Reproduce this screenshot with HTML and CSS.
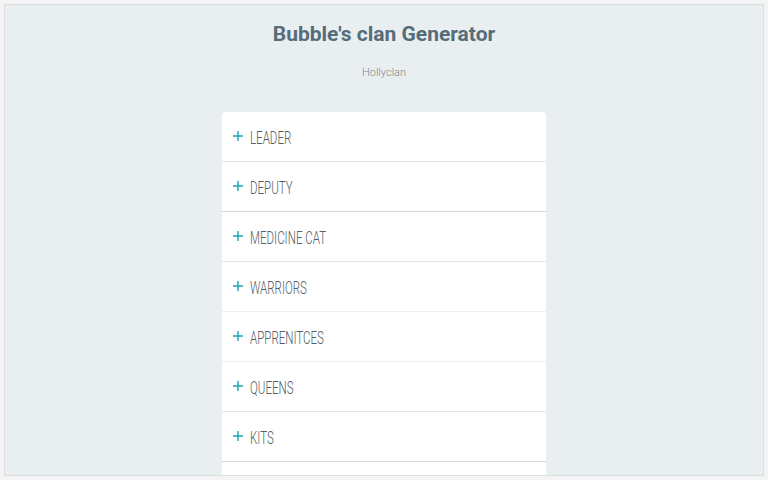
FILE: index.html
```html
<!DOCTYPE html>
<html lang="en">
  <head>
    <meta charset="UTF-8" />
    <meta name="viewport" content="width=device-width, initial-scale=1.0" />
    <title>Bubble's clan Generator</title>
    <link rel="stylesheet" href="styles.css">
  </head>
  <body>
    <div class="frame">
      <h1>Bubble's clan Generator</h1>
      <p class="clan-name">Hollyclan</p>

      <div class="ranks">
        <div class="rank"><svg class="plus" viewBox="0 0 10 10"><path d="M5 0V10M0 5H10"/></svg><span class="label">LEADER</span></div>
        <div class="rank dark"><svg class="plus" viewBox="0 0 10 10"><path d="M5 0V10M0 5H10"/></svg><span class="label">DEPUTY</span></div>
        <div class="rank"><svg class="plus" viewBox="0 0 10 10"><path d="M5 0V10M0 5H10"/></svg><span class="label">MEDICINE CAT</span></div>
        <div class="rank light"><svg class="plus" viewBox="0 0 10 10"><path d="M5 0V10M0 5H10"/></svg><span class="label">WARRIORS</span></div>
        <div class="rank light"><svg class="plus" viewBox="0 0 10 10"><path d="M5 0V10M0 5H10"/></svg><span class="label">APPRENITCES</span></div>
        <div class="rank"><svg class="plus" viewBox="0 0 10 10"><path d="M5 0V10M0 5H10"/></svg><span class="label">QUEENS</span></div>
        <div class="rank dark"><svg class="plus" viewBox="0 0 10 10"><path d="M5 0V10M0 5H10"/></svg><span class="label">KITS</span></div>
        <div class="rank"></div>
      </div>
    </div>
  </body>
</html>
```

FILE: styles.css
```css
body {
  margin: 0;
  padding: 4px;
  background-color: #f4f4f4;
  font-family: Roboto, "Liberation Sans", sans-serif;
}
.frame {
  height: 470px;
  border: 1px solid #dcdfe1;
  background-color: #e9eef1;
  overflow: hidden;
  text-align: center;
}
h1 {
  margin: 16px 0 0;
  font-size: 21px;
  font-weight: 700;
  line-height: 26px;
  color: #566c79;
}
.clan-name {
  margin: 19px 0 0;
  font-size: 11px;
  font-weight: 300;
  line-height: 14px;
  color: #7d868c;
}
.ranks {
  width: 324px;
  margin: 32px auto 0;
  background-color: #fff;
  border-radius: 4px;
  text-align: left;
}
.rank {
  height: 49px;
  display: flex;
  align-items: center;
  padding-left: 11px;
  border-bottom: 1px solid #e3e5e7;
}
.rank.dark {
  border-bottom-color: #d3d6d9;
}
.rank.light {
  border-bottom-color: #eef0f1;
}
.plus {
  width: 10px;
  height: 10px;
  margin-top: -2px;
  stroke: #1ba4b6;
  stroke-width: 1.4;
  fill: none;
}
.label {
  display: inline-block;
  margin-left: 7px;
  margin-top: 1px;
  font-size: 18px;
  font-weight: 300;
  color: #535d66;
  transform: scaleX(0.64);
  transform-origin: left center;
}
```
